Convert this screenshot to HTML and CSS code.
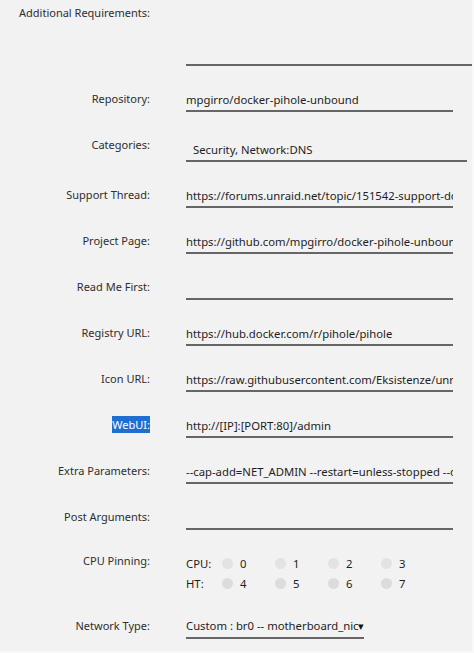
FILE: index.html
```html
<!DOCTYPE html>
<html>
<head>
<meta charset="utf-8">
<title>Template</title>
<link rel="stylesheet" href="styles.css">
</head>
<body>
<div class="page">
  <form class="form">
    <div class="row row-top">
      <label class="label">Additional Requirements:</label>
      <textarea class="field area" readonly></textarea>
    </div>
    <div class="row">
      <label class="label">Repository:</label>
      <input class="field" readonly value="mpgirro/docker-pihole-unbound">
    </div>
    <div class="row">
      <label class="label">Categories:</label>
      <input class="field cats" readonly value="Security, Network:DNS">
    </div>
    <div class="row">
      <label class="label">Support Thread:</label>
      <input class="field" readonly value="https://forums.unraid.net/topic/151542-support-docker-pihole-unbound/">
    </div>
    <div class="row">
      <label class="label">Project Page:</label>
      <input class="field" readonly value="https://github.com/mpgirro/docker-pihole-unbound">
    </div>
    <div class="row">
      <label class="label">Read Me First:</label>
      <input class="field" readonly value="">
    </div>
    <div class="row">
      <label class="label">Registry URL:</label>
      <input class="field" readonly value="https://hub.docker.com/r/pihole/pihole">
    </div>
    <div class="row">
      <label class="label">Icon URL:</label>
      <input class="field" readonly value="https://raw.githubusercontent.com/Eksistenze/unraid-templates/main/icons/pihole.png">
    </div>
    <div class="row">
      <label class="label"><span class="selected">WebUI:</span></label>
      <input class="field" readonly value="http://[IP]:[PORT:80]/admin">
    </div>
    <div class="row">
      <label class="label">Extra Parameters:</label>
      <input class="field" readonly value="--cap-add=NET_ADMIN --restart=unless-stopped --dns=127.0.0.1">
    </div>
    <div class="row">
      <label class="label">Post Arguments:</label>
      <input class="field" readonly value="">
    </div>
    <div class="row row-cpu">
      <label class="label label-cpu">CPU Pinning:</label>
      <div class="pins">
        <div class="pin-line">
          <span class="pin-title">CPU:</span>
          <span class="pin"><span class="dot"></span>0</span>
          <span class="pin"><span class="dot"></span>1</span>
          <span class="pin"><span class="dot"></span>2</span>
          <span class="pin"><span class="dot"></span>3</span>
        </div>
        <div class="pin-line">
          <span class="pin-title">HT:</span>
          <span class="pin"><span class="dot dot-ht"></span>4</span>
          <span class="pin"><span class="dot dot-ht"></span>5</span>
          <span class="pin"><span class="dot dot-ht"></span>6</span>
          <span class="pin"><span class="dot dot-ht"></span>7</span>
        </div>
      </div>
    </div>
    <div class="row">
      <label class="label">Network Type:</label>
      <div class="field select">Custom : br0 -- motherboard_nic<span class="caret">&#9662;</span></div>
    </div>
  </form>
</div>
</body>
</html>
```
FILE: styles.css
```css
html, body {
  margin: 0;
  padding: 0;
  background: #f9f9f9;
}

.page {
  width: 472px;
  height: 651px;
  background: #f2f2f2;
  overflow: hidden;
  font-family: "Noto Sans", "Liberation Sans", sans-serif;
  font-size: 11.3px;
  color: #2b2b2b;
}

.form {
  padding-top: 2px;
}

.row {
  display: grid;
  grid-template-columns: 150px 1fr;
  column-gap: 36px;
  align-items: start;
  margin-bottom: 22px;
}

.label {
  text-align: right;
  font-size: 11px;
  line-height: 21px;
  white-space: nowrap;
  color: #2e2e2e;
}

.selected {
  background: #1f6fd1;
  color: #fff;
  padding: 1px 0;
}

.field {
  display: block;
  box-sizing: border-box;
  width: 267px;
  height: 24px;
  margin: 0;
  padding: 0;
  border: 0;
  border-bottom: 2px solid #666;
  background: transparent;
  font: inherit;
  line-height: 22px;
  color: #1e1e1e;
  outline: none;
  white-space: nowrap;
  overflow: hidden;
}

.area {
  width: 288px;
  height: 64px;
  resize: none;
}

.cats {
  width: 281px;
  height: 28px;
  padding: 4px 0 0 7px;
}

.row-cpu {
  margin-bottom: 22px;
}

.label-cpu {
  line-height: 18px;
}

.pins {
  padding-top: 1px;
}

.pin-line {
  display: flex;
  align-items: center;
  height: 20px;
  color: #1e1e1e;
}

.pin-title {
  width: 36px;
}

.pin {
  display: flex;
  align-items: center;
  width: 53px;
}

.dot {
  width: 11px;
  height: 11px;
  border-radius: 50%;
  background: #e3e3e3;
  margin-right: 7px;
}

.dot-ht {
  background: #dcdcdc;
}

.select {
  width: 178px;
  display: flex;
  align-items: center;
}

.caret {
  font-size: 11px;
  margin-left: 0;
  color: #111;
}
```
